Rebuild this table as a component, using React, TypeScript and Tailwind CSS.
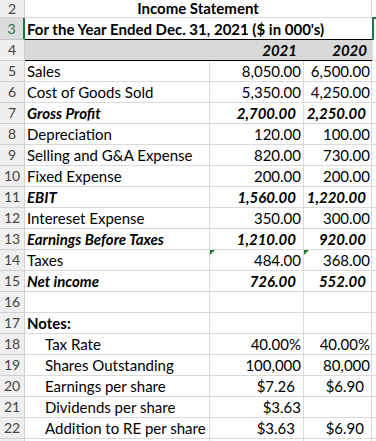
import React from 'react'

type Row = {
  n: number
  a?: string
  b?: string
  c?: string
  bold?: boolean // bold italic totals
  indent?: boolean
  padB?: boolean
  padC?: boolean
  flag?: boolean
  hideNum?: boolean
}

const BODY: Row[] = [
  { n: 5, a: 'Sales', b: '8,050.00', c: '6,500.00' },
  { n: 6, a: 'Cost of Goods Sold', b: '5,350.00', c: '4,250.00' },
  { n: 7, a: 'Gross Profit', b: '2,700.00', c: '2,250.00', bold: true },
  { n: 8, a: 'Depreciation', b: '120.00', c: '100.00' },
  { n: 9, a: 'Selling and G&A Expense', b: '820.00', c: '730.00' },
  { n: 10, a: 'Fixed Expense', b: '200.00', c: '200.00' },
  { n: 11, a: 'EBIT', b: '1,560.00', c: '1,220.00', bold: true },
  { n: 12, a: 'Intereset Expense', b: '350.00', c: '300.00' },
  { n: 13, a: 'Earnings Before Taxes', b: '1,210.00', c: '920.00', bold: true },
  { n: 14, a: 'Taxes', b: '484.00', c: '368.00', flag: true },
  { n: 15, a: 'Net income', b: '726.00', c: '552.00', bold: true },
  { n: 16 },
  { n: 17, a: 'Notes:' },
  { n: 18, a: 'Tax Rate', b: '40.00%', c: '40.00%', indent: true },
  { n: 19, a: 'Shares Outstanding', b: '100,000', c: '80,000', indent: true },
  { n: 20, a: 'Earnings per share', b: '$7.26', c: '$6.90', indent: true, padB: true, padC: true },
  { n: 21, a: 'Dividends per share', b: '$3.63', indent: true },
  { n: 22, a: 'Addition to RE per share', b: '$3.63', c: '$6.90', indent: true, padB: true, padC: true },
  { n: 23, hideNum: true },
]

const font = { fontFamily: 'Lato, "Liberation Sans", sans-serif' }

function Flag() {
  return (
    <div className="absolute left-0 top-0 w-0 h-0 border-t-[5px] border-r-[5px] border-t-[#1e7b34] border-r-transparent" />
  )
}

function Header({ n, active }: { n?: number; active?: boolean }) {
  return (
    <div
      className={`w-[25px] shrink-0 flex items-center justify-center border-b border-r text-[14px] ${
        active ? 'bg-[#dcdcdc] text-[#217346] border-r-2 border-r-[#217346] border-b-[#c6c6c6]' : 'bg-[#efefef] text-[#444] border-[#d0d0d0]'
      }`}
    >
      {n}
    </div>
  )
}

export default function App() {
  return (
    <div className="w-[376px] h-[441px] overflow-hidden bg-white text-black text-[15px] leading-[18px]" style={font}>
      {/* row 2: merged title */}
      <div className="flex h-[18px]">
        <Header n={2} />
        <div className="w-[347px] shrink-0 flex items-end justify-center border-b border-r border-[#dadada] font-bold">
          Income Statement
        </div>
        <div className="flex-1 border-b border-[#dadada]" />
      </div>

      {/* row 3: subtitle, selected row */}
      <div className="flex h-[22px]">
        <Header n={3} active />
        <div className="w-[347px] shrink-0 flex items-end border-b border-black font-bold pl-[2px] pb-[1px] whitespace-nowrap">
          For the Year Ended Dec. 31, 2021 ($ in 000's)
        </div>
        <div className="relative flex-1">
          <div className="absolute -top-[1px] left-0 w-[40px] h-[23px] border-t-2 border-l-2 border-[#217346]" />
        </div>
      </div>

      {/* row 4: column headings */}
      <div className="flex h-[21px]">
        <Header n={4} />
        <div className="w-[347px] shrink-0 flex bg-[#d9d9d9] border-b border-black font-bold italic">
          <div className="w-[185px]" />
          <div className="w-[94px] flex items-end justify-end pr-[7px] pb-[1px]">2021</div>
          <div className="w-[68px] flex items-end justify-end pr-[5px] pb-[1px]">2020</div>
        </div>
        <div className="flex-1 border-b border-l border-[#dadada]" />
      </div>

      {BODY.map((r) => (
        <div key={r.n} className="flex h-[21px]">
          <Header n={r.hideNum ? undefined : r.n} />
          <div
            className={`w-[185px] shrink-0 flex items-end border-b border-r border-[#dadada] pb-[1px] whitespace-nowrap overflow-hidden ${
              r.indent ? 'pl-[20px]' : 'pl-[2px]'
            } ${r.bold ? 'font-bold italic' : ''} ${r.n === 17 ? 'font-bold' : ''}`}
          >
            {r.a}
          </div>
          <div
            className={`relative w-[94px] shrink-0 flex items-end justify-end border-b border-r border-[#dadada] pb-[1px] ${
              r.bold ? 'font-bold italic pr-[7px]' : r.padB ? 'pr-[8px]' : 'pr-[2px]'
            }`}
          >
            {r.flag && <Flag />}
            {r.b}
          </div>
          <div
            className={`relative w-[68px] shrink-0 flex items-end justify-end border-b border-r border-[#dadada] pb-[1px] ${
              r.bold ? 'font-bold italic pr-[5px]' : r.padC ? 'pr-[7px]' : 'pr-[1px]'
            }`}
          >
            {r.flag && <Flag />}
            {r.c}
          </div>
          <div className="flex-1 border-b border-[#dadada]" />
        </div>
      ))}
    </div>
  )
}
